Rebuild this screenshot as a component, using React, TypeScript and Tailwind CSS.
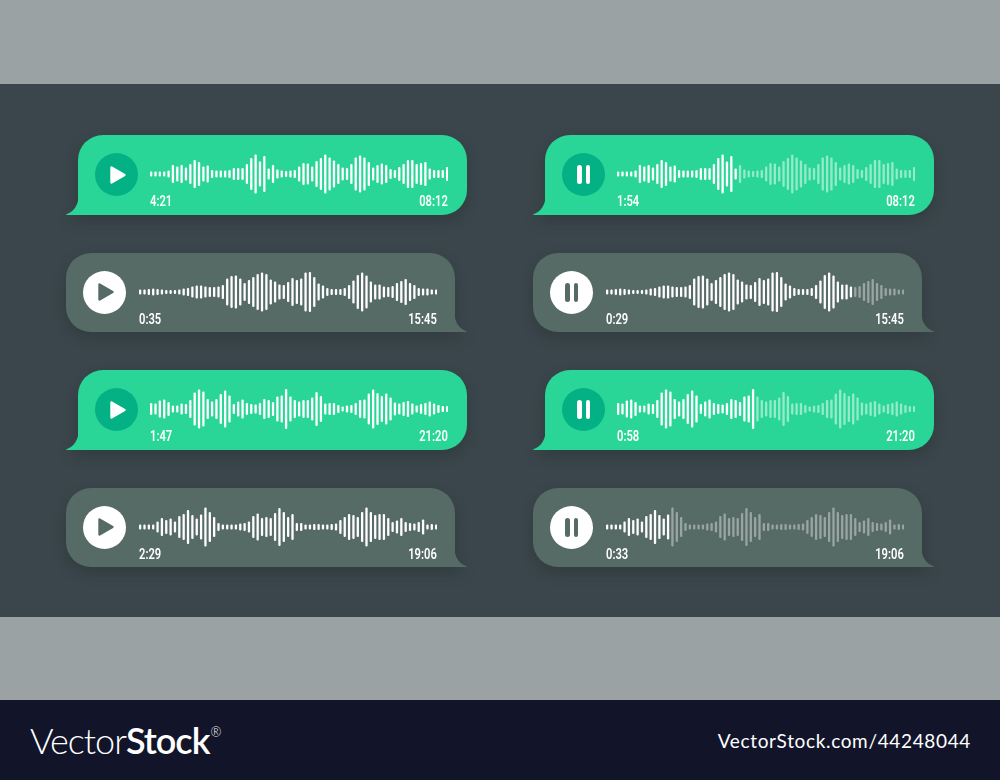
import clsx from "clsx";

const WAVE_A = [5,5,5,5,7,18,15,18,13,20,28,24,15,17,8,7,7,7,8,12,12,12,20,32,39,25,36,11,18,9,7,6,7,8,15,22,21,15,26,32,39,33,27,20,13,12,20,33,37,33,24,13,18,21,18,10,8,14,20,28,28,20,22,24,11,8,8,8,14];
const WAVE_B = [5,5,6,7,6,5,4,4,4,5,7,8,11,13,13,11,10,10,11,14,27,32,33,27,18,24,30,36,39,36,25,21,15,14,20,28,24,27,39,40,30,17,13,8,6,6,6,8,14,23,34,39,33,21,15,15,11,10,12,18,22,26,18,14,8,7,7,5,5];
const WAVE_C = [12,11,17,19,14,7,7,11,10,18,33,39,35,20,15,20,30,37,27,10,15,19,12,10,9,12,20,18,14,25,27,40,25,18,15,18,18,23,34,26,11,12,12,8,5,7,8,12,18,19,31,39,32,26,31,23,13,11,14,16,11,7,10,12,15,11,8,6,6];
const WAVE_D = [5,5,5,5,11,18,14,17,11,22,26,34,24,17,25,39,30,20,8,5,5,5,5,7,8,11,22,27,18,20,18,28,38,30,20,26,8,8,5,5,6,6,5,5,6,7,14,20,26,24,20,30,39,30,24,26,26,18,10,13,18,10,8,7,10,15,5,6,5];

interface BubbleProps {
  variant: "green" | "gray";
  current: string;
  total: string;
  wave: number[];
  played?: number;
}

function PlayIcon({ className }: { className: string }) {
  return (
    <svg width="16" height="18" viewBox="0 0 16 18" className={className}>
      <path d="M1.5 1.5 L14.5 9 L1.5 16.5 Z" fill="currentColor" stroke="currentColor" strokeWidth="2.4" strokeLinejoin="round" />
    </svg>
  );
}

function PauseIcon({ className }: { className: string }) {
  return (
    <div className={clsx("flex gap-[4px]", className)}>
      <span className="h-[19px] w-[4.5px] rounded-full bg-current" />
      <span className="h-[19px] w-[4.5px] rounded-full bg-current" />
    </div>
  );
}

function Wave({ bars, played, dim }: { bars: number[]; played?: number; dim: number }) {
  const pitch = 296 / (bars.length - 1);
  return (
    <svg width="298" height="40" viewBox="0 0 298 40" className="block">
      {bars.map((h, i) => (
        <rect
          key={i}
          x={i * pitch}
          y={20 - h / 2}
          width="2.3"
          height={h}
          rx="1"
          fill="#fff"
          opacity={played !== undefined && i >= played ? dim : 1}
        />
      ))}
    </svg>
  );
}

function Bubble({ variant, current, total, wave, played }: BubbleProps) {
  const green = variant === "green";
  const paused = played !== undefined;
  const iconColor = green ? "text-white" : "text-[#566a66]";

  return (
    <div className="relative h-[79.5px] w-[401px] drop-shadow-[0_6px_7px_rgba(0,0,0,0.14)]">
      <div
        className={clsx(
          "flex h-full w-[389px] pt-[18px] pl-[17px]",
          green
            ? "ml-[12px] rounded-t-[25px] rounded-br-[25px] bg-[#29d697]"
            : "rounded-t-[25px] rounded-bl-[25px] bg-[#566a66]"
        )}
      >
        <div
          className={clsx(
            "flex h-[43px] w-[43px] shrink-0 items-center justify-center rounded-full",
            green ? "bg-[#03b185]" : "bg-white"
          )}
        >
          {paused ? <PauseIcon className={iconColor} /> : <PlayIcon className={clsx("ml-[3px]", iconColor)} />}
        </div>
        <div className={clsx("w-[298px]", green ? "ml-[12px]" : "ml-[13px]")}>
          <div className="mt-[1px]">
            <Wave bars={wave} played={played} dim={green ? 0.5 : 0.4} />
          </div>
          <div className="flex justify-between font-['Roboto',sans-serif] text-[14px] leading-[14px] font-semibold text-white">
            <span className="origin-left scale-x-[0.8]">{current}</span>
            <span className="origin-right scale-x-[0.8]">{total}</span>
          </div>
        </div>
      </div>

      {/* Tail */}
      {green ? (
        <svg width="13" height="22" viewBox="0 0 13 22" className="absolute bottom-0 left-0 text-[#29d697]">
          <path d="M13 0 C13 11 8 19 0.5 21.2 C0 21.5 0 22 1 22 L13 22 Z" fill="currentColor" />
        </svg>
      ) : (
        <svg width="13" height="22" viewBox="0 0 13 22" className="absolute right-0 bottom-0 text-[#566a66]">
          <path d="M0 0 C0 11 5 19 12.5 21.2 C13 21.5 13 22 12 22 L0 22 Z" fill="currentColor" />
        </svg>
      )}
    </div>
  );
}

export default function App() {
  return (
    <div className="flex h-[780px] w-[1000px] flex-col overflow-hidden bg-[#9aa2a4]">
      <div className="h-[84px]" />

      <div className="h-[533px] bg-[#3a464b] pt-[51px] pl-[66px]">
        <div className="grid grid-cols-[401px_401px] gap-x-[66px] gap-y-[38px]">
          <Bubble variant="green" current="4:21" total="08:12" wave={WAVE_A} />
          <Bubble variant="green" current="1:54" total="08:12" wave={WAVE_A} played={28} />
          <Bubble variant="gray" current="0:35" total="15:45" wave={WAVE_B} />
          <Bubble variant="gray" current="0:29" total="15:45" wave={WAVE_B} played={57} />
          <Bubble variant="green" current="1:47" total="21:20" wave={WAVE_C} />
          <Bubble variant="green" current="0:58" total="21:20" wave={WAVE_C} played={32} />
          <Bubble variant="gray" current="2:29" total="19:06" wave={WAVE_D} />
          <Bubble variant="gray" current="0:33" total="19:06" wave={WAVE_D} played={15} />
        </div>
      </div>

      <div className="h-[83px]" />

      <div className="flex h-[80px] items-center justify-between bg-[#12152a] pr-[29px] pl-[30px] text-white">
        <div className="flex items-start font-['Lato',sans-serif] text-[36px] leading-none tracking-[-1px]">
          <span className="font-light">Vector</span>
          <span className="font-semibold">Stock</span>
          <span className="mt-[4px] ml-[1px] text-[13px] font-light tracking-normal">®</span>
        </div>
        <div className="font-['Lato',sans-serif] text-[19px] leading-none font-normal tracking-[0.65px]">
          VectorStock.com/44248044
        </div>
      </div>
    </div>
  );
}
